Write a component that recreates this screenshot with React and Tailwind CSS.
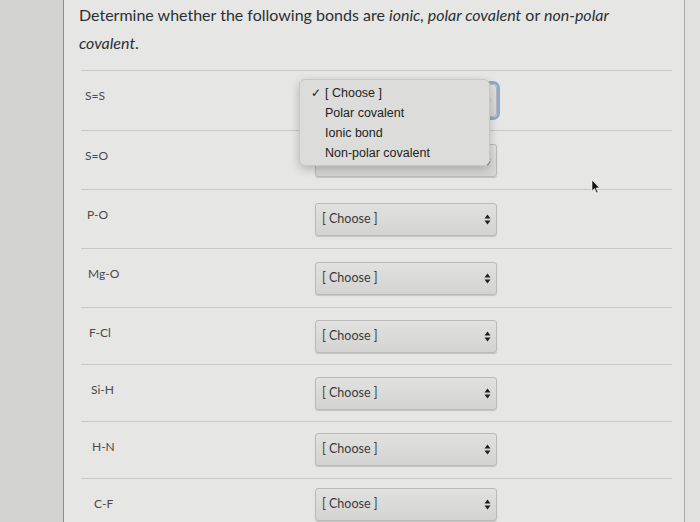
import React from "react";

const rows = [
  { label: "S=S", h: "h-[60px]", pl: "pl-[4px]", pt: "pt-[13px]", focus: true },
  { label: "S=O", h: "h-[59px]", pl: "pl-[4px]", pt: "pt-[13px]" },
  { label: "P-O", h: "h-[59px]", pl: "pl-[6px]", pt: "pt-[13px]" },
  { label: "Mg-O", h: "h-[59px]", pl: "pl-[7px]", pt: "pt-[13px]" },
  { label: "F-Cl", h: "h-[57px]", pl: "pl-[8px]", pt: "pt-[12px]" },
  { label: "Si-H", h: "h-[57px]", pl: "pl-[10px]", pt: "pt-[12px]" },
  { label: "H-N", h: "h-[57px]", pl: "pl-[11px]", pt: "pt-[11px]" },
  { label: "C-F", h: "h-[57px]", pl: "pl-[13px]", pt: "pt-[9px]" },
];

function Arrows() {
  return (
    <svg width="7" height="11" viewBox="0 0 7 11" className="shrink-0">
      <path d="M3.5 0.5 L6.5 4.5 L0.5 4.5 Z" fill="#1f1f1f" />
      <path d="M3.5 10.5 L6.5 6.5 L0.5 6.5 Z" fill="#1f1f1f" />
    </svg>
  );
}

function Select({ focus }) {
  return (
    <div
      className={
        focus
          ? "w-[182px] h-[33px] rounded-[4px] border border-[#b9b9b7] bg-gradient-to-b from-[#e2e2e0] to-[#d5d5d3] flex items-center justify-between pl-[6px] pr-[5px] ring-[3px] ring-[#8aa9d6]"
          : "w-[182px] h-[33px] rounded-[3px] border border-[#bababa] bg-gradient-to-b from-[#e1e1df] to-[#d3d3d1] shadow-[0_1px_1px_rgba(0,0,0,0.15)] flex items-center justify-between pl-[6px] pr-[5px]"
      }
    >
      <span className="text-[12.5px] text-[#3a3a3a] font-['Lato','Liberation_Sans',sans-serif]">
        [ Choose ]
      </span>
      <Arrows />
    </div>
  );
}

export default function App() {
  return (
    <div className="w-[700px] h-[522px] overflow-hidden flex bg-[#e1e1df] font-['Lato','Liberation_Sans',sans-serif]">
      <div className="w-[64px] shrink-0 bg-[#d2d2d0] border-r border-[#8e8e8c]" />
      <div className="w-[621px] shrink-0 bg-[#e6e6e4] border-r border-[#a9a9a7] pl-[15px] pr-[12px] pt-[1px] relative">
        <p className="text-[16px] leading-[28px] text-[#2a3035]">
          Determine whether the following bonds are <i>ionic, polar covalent</i> or <i>non-polar covalent</i>.
        </p>
        <div className="mt-[13px] ml-[2px] relative">
          {rows.map((r) => (
            <div
              key={r.label}
              className={`${r.h} border-t border-[#c9c9c7] flex`}
            >
              <div className={`w-[234px] shrink-0 ${r.pl} pt-[17px] text-[12px] leading-[16px] text-[#4a4a4a]`}>
                {r.label}
              </div>
              <div className={r.pt}>
                <Select focus={r.focus} />
              </div>
            </div>
          ))}
          <div className="absolute left-[218px] top-[9px] w-[191px] h-[87px] rounded-[6px] bg-[#dcdcda] border border-[#c8c8c6] shadow-[0_3px_10px_rgba(0,0,0,0.22)] pt-[3px] font-['Liberation_Sans',sans-serif] text-[12.5px] leading-[20px] text-[#222]">
            <div className="flex">
              <span className="w-[25px] pl-[11px] text-[12px]">✓</span>
              <span>[ Choose ]</span>
            </div>
            <div className="pl-[25px]">Polar covalent</div>
            <div className="pl-[25px]">Ionic bond</div>
            <div className="pl-[25px]">Non-polar covalent</div>
          </div>
        </div>
        <svg
          className="absolute left-[527px] top-[179px]"
          width="10"
          height="15"
          viewBox="0 0 10 15"
        >
          <path d="M1 1 L1 12 L3.5 9.5 L5.5 14 L7 13.3 L5 9 L8.5 9 Z" fill="#111" stroke="#fff" strokeWidth="0.6" />
        </svg>
      </div>
      <div className="flex-1" />
    </div>
  );
}
